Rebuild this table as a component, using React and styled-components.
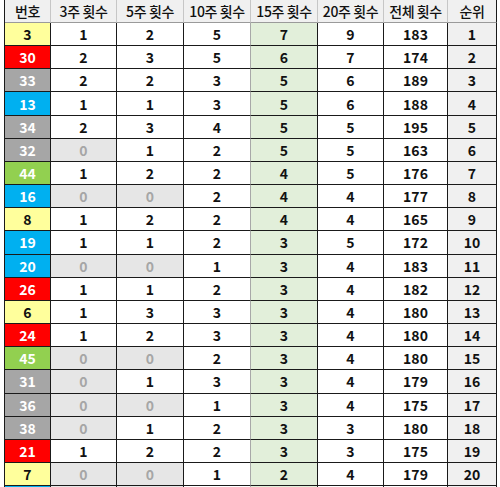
import React from 'react';
import styled, { createGlobalStyle } from 'styled-components';

const GlobalStyle = createGlobalStyle`
  html, body {
    margin: 0;
    padding: 0;
    background: #ffffff;
  }
`;

const COLS = '46px 66px 67px 67px 67px 66px 64px 49px';

const Page = styled.div`
  width: 500px;
  height: 487px;
  overflow: hidden;
  padding-left: 4px;
  box-sizing: border-box;
  font-family: "Noto Sans CJK KR", "Noto Sans", sans-serif;
`;

const Sheet = styled.div`
  display: flex;
  flex-direction: column;
  width: 493px;
  border-left: 1px solid #1a1a1a;
  box-sizing: border-box;
`;

const Row = styled.div`
  display: grid;
  grid-template-columns: ${COLS};
  height: ${p => (p.$head ? '23px' : '23.16px')};
  flex: none;
`;

const HeadCell = styled.div`
  display: flex;
  align-items: center;
  justify-content: center;
  background: #f0f0f0;
  border-right: 1px solid #c6c6c6;
  border-bottom: 1px solid #9a9a9a;
  color: #111;
  font-size: 14px;
  font-weight: 500;
  letter-spacing: -0.4px;
  &:last-child {
    border-right-color: #1a1a1a;
  }
`;

const numberColors = {
  yellow: ['#ffff9c', '#111'],
  red: ['#ff0000', '#ffffff'],
  gray: ['#a6a6a6', '#ffffff'],
  blue: ['#00b0f0', '#ffffff'],
  green: ['#92d050', '#ffffff'],
};

const Cell = styled.div`
  display: flex;
  align-items: center;
  justify-content: center;
  border-right: 1px solid ${p => (p.$soft ? '#a8a8a8' : '#1a1a1a')};
  border-bottom: 1px solid #1a1a1a;
  font-size: 14px;
  font-weight: 700;
  background: ${p => p.$bg || '#ffffff'};
  color: ${p => p.$fg || '#111'};
`;

const rows = [
  [3, 'yellow', 1, 2, 5, 7, 9, 183],
  [30, 'red', 2, 3, 5, 6, 7, 174],
  [33, 'gray', 2, 2, 3, 5, 6, 189],
  [13, 'blue', 1, 1, 3, 5, 6, 188],
  [34, 'gray', 2, 3, 4, 5, 5, 195],
  [32, 'gray', 0, 1, 2, 5, 5, 163],
  [44, 'green', 1, 2, 2, 4, 5, 176],
  [16, 'blue', 0, 0, 2, 4, 4, 177],
  [8, 'yellow', 1, 2, 2, 4, 4, 165],
  [19, 'blue', 1, 1, 2, 3, 5, 172],
  [20, 'blue', 0, 0, 1, 3, 4, 183],
  [26, 'red', 1, 1, 2, 3, 4, 182],
  [6, 'yellow', 1, 3, 3, 3, 4, 180],
  [24, 'red', 1, 2, 3, 3, 4, 180],
  [45, 'green', 0, 0, 2, 3, 4, 180],
  [31, 'gray', 0, 1, 3, 3, 4, 179],
  [36, 'gray', 0, 0, 1, 3, 4, 175],
  [38, 'gray', 0, 1, 2, 3, 3, 180],
  [21, 'red', 1, 2, 2, 3, 3, 175],
  [7, 'yellow', 0, 0, 1, 2, 4, 179],
];

const heads = ['번호', '3주 횟수', '5주 횟수', '10주 횟수', '15주 횟수', '20주 횟수', '전체 횟수', '순위'];

const countCell = (v, key) =>
  v === 0
    ? <Cell key={key} $bg="#e6e6e6" $fg="#a6a6a6">{v}</Cell>
    : <Cell key={key}>{v}</Cell>;

const App = () => {
  return (
    <Page>
      <GlobalStyle />
      <Sheet>
        <Row $head>
          {heads.map(h => <HeadCell key={h}>{h}</HeadCell>)}
        </Row>
        {rows.map(([num, color, w3, w5, w10, w15, w20, total], i) => (
          <Row key={num}>
            <Cell $bg={numberColors[color][0]} $fg={numberColors[color][1]}>{num}</Cell>
            {countCell(w3, 'a')}
            {countCell(w5, 'b')}
            <Cell $soft>{w10}</Cell>
            <Cell $bg="#e2efda">{w15}</Cell>
            <Cell>{w20}</Cell>
            <Cell>{total}</Cell>
            <Cell $bg="#f0f0f0">{i + 1}</Cell>
          </Row>
        ))}
        {/* next row, only its top edge is in view */}
        <Row>
          <Cell $bg={numberColors.blue[0]} />
          <Cell $bg="#e6e6e6" />
          <Cell $bg="#e6e6e6" />
          <Cell $soft />
          <Cell $bg="#e2efda" />
          <Cell />
          <Cell />
          <Cell $bg="#f0f0f0" />
        </Row>
      </Sheet>
    </Page>
  );
};

export default App;
